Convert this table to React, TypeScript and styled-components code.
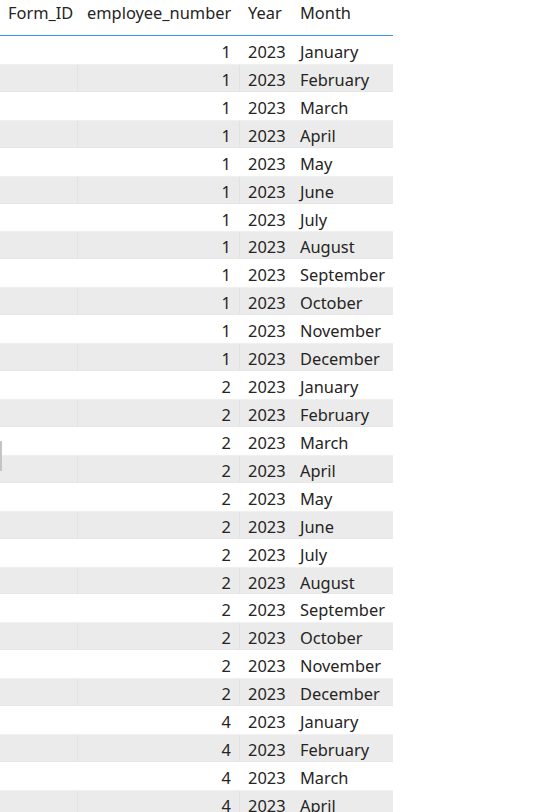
import React from "react";
import styled, { createGlobalStyle } from "styled-components";

const Global = createGlobalStyle`
  html, body { margin: 0; padding: 0; background: #ffffff; }
  body { font-family: "Noto Sans", "Open Sans", sans-serif; color: #252423; }
`;

const Page = styled.div`
  position: relative;
  width: 544px;
  height: 812px;
  overflow: hidden;
  background: #fff;
`;

const Table = styled.div`
  width: 393px;
  display: flex;
  flex-direction: column;
`;

const COLS = "78px 162px 52px 101px";

const HeaderRow = styled.div`
  display: grid;
  grid-template-columns: ${COLS};
  height: 35px;
  align-items: start;
`;

const HeaderLine = styled.div`
  height: 1.5px;
  margin-top: -0.5px;
  background: #3c95f4;
`;

const HeaderCell = styled.div<{ $pad: number }>`
  padding-left: ${(p) => p.$pad}px;
  padding-top: 2px;
  font-size: 16.4px;
  line-height: 22px;
  white-space: nowrap;
  color: #252423;
`;

const Row = styled.div<{ $alt: boolean }>`
  display: grid;
  grid-template-columns: ${COLS};
  height: 27.93px;
  box-sizing: border-box;
  background: ${(p) => (p.$alt ? "#ebebeb" : "#ffffff")};
  border-top: 1px solid ${(p) => (p.$alt ? "#f0f0f0" : "transparent")};
  border-bottom: 1px solid ${(p) => (p.$alt ? "#e6e6e6" : "transparent")};
  align-items: center;
`;

const Cell = styled.div<{ $align?: "left" | "right"; $divider?: boolean }>`
  height: 100%;
  display: flex;
  align-items: center;
  justify-content: ${(p) => (p.$align === "right" ? "flex-end" : "flex-start")};
  padding: 3px 8px 0 8px;
  font-size: 16.4px;
  white-space: nowrap;
  color: #252423;
  border-right: 1px solid ${(p) => (p.$divider ? "rgba(0,0,0,0.035)" : "transparent")};
  box-sizing: border-box;
`;

const ScrollMark = styled.div`
  position: absolute;
  left: 0;
  top: 441px;
  width: 1.5px;
  height: 30px;
  background: #c4c4c4;
`;

const months = [
  "January","February","March","April","May","June",
  "July","August","September","October","November","December",
];

const rows: { emp: number; month: string }[] = [];
[1, 2, 4].forEach((e) => months.forEach((m) => rows.push({ emp: e, month: m })));

export default function App() {
  return (
    <Page>
      <Global />
      <Table>
        <HeaderRow>
          <HeaderCell $pad={8}>Form_ID</HeaderCell>
          <HeaderCell $pad={9}>employee_number</HeaderCell>
          <HeaderCell $pad={8}>Year</HeaderCell>
          <HeaderCell $pad={8}>Month</HeaderCell>
        </HeaderRow>
        <HeaderLine />
        {rows.slice(0, 28).map((r, i) => (
          <Row key={i} $alt={i % 2 === 1}>
            <Cell $divider={i % 2 === 1} />
            <Cell $align="right" $divider={i % 2 === 1}>{r.emp}</Cell>
            <Cell>2023</Cell>
            <Cell>{r.month}</Cell>
          </Row>
        ))}
      </Table>
      <ScrollMark />
    </Page>
  );
}
